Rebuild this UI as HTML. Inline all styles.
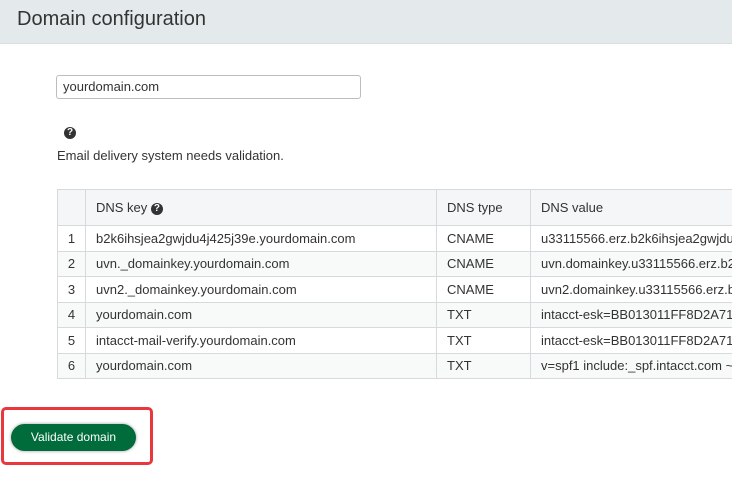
<!DOCTYPE html><html><head><style>
body{margin:0;width:732px;height:478px;overflow:hidden;background:#fff;font-family:"Liberation Sans",sans-serif;color:#333;position:relative}
.hd{position:absolute;left:0;top:0;width:732px;height:43px;background:#e4eaec;border-bottom:1px solid #d9dfe1}
.hd span{position:absolute;left:17px;top:8px;font-size:20px;color:#333}
.in{position:absolute;left:56px;top:75px;border:1px solid #b9bec2;border-radius:3px;font-size:13px;line-height:22px;padding-left:6px;box-sizing:border-box;width:305px;height:24px}
.q{display:inline-block;width:12px;height:12px;border-radius:50%;background:#333;color:#fff;font-size:10px;font-weight:bold;text-align:center;line-height:12px;vertical-align:middle}
.msg{position:absolute;left:57px;top:148px;font-size:13px}
.clip{position:absolute;left:57px;top:189px;width:675px;height:200px;overflow:hidden}
table{border-collapse:collapse;font-size:13px;width:780px;table-layout:fixed}
td,th{border:1px solid #d5dadd;height:24.5px;padding:0 0 0 10px;text-align:left;white-space:nowrap;overflow:hidden}
th{font-weight:normal;height:35px;background:#f4f6f7}
tr:nth-child(odd) td{background:#f8fafa}
td.n{padding:0;text-align:center}
.red{position:absolute;left:1px;top:407px;width:146px;height:52px;border:3px solid #e8383d;border-radius:5px}
.btn{position:absolute;left:11px;top:424px;width:125px;height:27px;border-radius:14px;background:#006b3b;color:#fff;font-size:12px;text-align:center;line-height:27px;box-shadow:0 0 3px rgba(0,0,0,.4)}
</style></head><body>
<div class="hd"><span>Domain configuration</span></div>
<div class="in">yourdomain.com</div>
<span class="q" style="position:absolute;left:64px;top:127px">?</span>
<div class="msg">Email delivery system needs validation.</div>
<div class="clip"><table>
<colgroup><col style="width:28px"><col style="width:351px"><col style="width:94px"><col></colgroup>
<tr><th></th><th>DNS key <span class="q">?</span></th><th>DNS type</th><th>DNS value</th></tr>
<tr><td class="n">1</td><td>b2k6ihsjea2gwjdu4j425j39e.yourdomain.com</td><td>CNAME</td><td>u33115566.erz.b2k6ihsjea2gwjdu4j425j39e</td></tr>
<tr><td class="n">2</td><td>uvn._domainkey.yourdomain.com</td><td>CNAME</td><td>uvn.domainkey.u33115566.erz.b2k6ihsjea</td></tr>
<tr><td class="n">3</td><td>uvn2._domainkey.yourdomain.com</td><td>CNAME</td><td>uvn2.domainkey.u33115566.erz.b2k6ihsj</td></tr>
<tr><td class="n">4</td><td>yourdomain.com</td><td>TXT</td><td>intacct-esk=BB013011FF8D2A71234</td></tr>
<tr><td class="n">5</td><td>intacct-mail-verify.yourdomain.com</td><td>TXT</td><td>intacct-esk=BB013011FF8D2A71234</td></tr>
<tr><td class="n">6</td><td>yourdomain.com</td><td>TXT</td><td>v=spf1 include:_spf.intacct.com ~all</td></tr>
</table></div>
<div class="red"></div>
<div class="btn">Validate domain</div>
</body></html>
